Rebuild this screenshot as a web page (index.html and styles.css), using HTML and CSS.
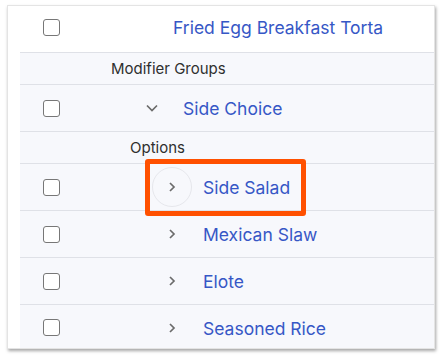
FILE: index.html
```html
<!DOCTYPE html>
<html>
<head>
<meta charset="utf-8">
<link rel="stylesheet" href="styles.css">
</head>
<body>
<div class="card">
  <div class="row row-top">
    <span class="cb"></span>
    <span class="link name-top">Fried Egg Breakfast Torta</span>
  </div>
  <div class="row row-head">
    <span class="label label-groups">Modifier Groups</span>
  </div>
  <div class="row row-item">
    <span class="cb"></span>
    <span class="chev chev-group">
      <svg width="16" height="16" viewBox="0 0 16 16"><path d="M3 5.5 L8 10.5 L13 5.5" fill="none" stroke="#6b6b6b" stroke-width="1.7"/></svg>
    </span>
    <span class="link">Side Choice</span>
  </div>
  <div class="row row-head">
    <span class="label label-options">Options</span>
  </div>
  <div class="row row-item row-focus">
    <span class="cb"></span>
    <span class="chev chev-opt chev-focus">
      <svg width="16" height="16" viewBox="0 0 16 16"><path d="M6 4 L10 8 L6 12" fill="none" stroke="#6b6b6b" stroke-width="1.7"/></svg>
    </span>
    <span class="link">Side Salad</span>
    <span class="highlight"></span>
  </div>
  <div class="row row-item">
    <span class="cb"></span>
    <span class="chev chev-opt">
      <svg width="16" height="16" viewBox="0 0 16 16"><path d="M6 4 L10 8 L6 12" fill="none" stroke="#6b6b6b" stroke-width="1.7"/></svg>
    </span>
    <span class="link">Mexican Slaw</span>
  </div>
  <div class="row row-item">
    <span class="cb"></span>
    <span class="chev chev-opt">
      <svg width="16" height="16" viewBox="0 0 16 16"><path d="M6 4 L10 8 L6 12" fill="none" stroke="#6b6b6b" stroke-width="1.7"/></svg>
    </span>
    <span class="link">Elote</span>
  </div>
  <div class="row row-item row-last">
    <span class="cb"></span>
    <span class="chev chev-opt">
      <svg width="16" height="16" viewBox="0 0 16 16"><path d="M6 4 L10 8 L6 12" fill="none" stroke="#6b6b6b" stroke-width="1.7"/></svg>
    </span>
    <span class="link">Seasoned Rice</span>
  </div>
</div>
</body>
</html>
```

FILE: styles.css
```css
html, body {
  margin: 0;
  padding: 0;
  background: #ffffff;
}
body {
  font-family: Inter, Roboto, "Liberation Sans", sans-serif;
  width: 443px;
  height: 359px;
  overflow: hidden;
}
.card {
  margin: 5px 0 0 7px;
  width: 428px;
  height: 344px;
  background: #ffffff;
  border: 1px solid #e4e4e4;
  box-shadow: 1px 2px 3px rgba(0, 0, 0, 0.35);
  padding-left: 12px;
  box-sizing: border-box;
  display: flex;
  flex-direction: column;
}
.row {
  position: relative;
  display: flex;
  align-items: center;
  background: #f7f8fc;
  border-bottom: 1px solid #dfe1e7;
  flex: none;
}
.row-focus {
  z-index: 2;
}
.row-top {
  background: #ffffff;
  height: 47px;
  padding-bottom: 4px;
  box-sizing: border-box;
}
.row-head {
  height: 31px;
}
.row-item {
  height: 46px;
}
.row-last {
  border-bottom: none;
  flex: 1;
  padding-top: 2px;
}
.cb {
  width: 17px;
  height: 17px;
  box-sizing: border-box;
  border: 1.5px solid #777777;
  border-radius: 3px;
  background: #ffffff;
  margin-left: 23px;
  flex: none;
}
.link {
  color: #3657c6;
  font-size: 17.5px;
  line-height: 20px;
  padding-top: 2px;
  white-space: nowrap;
}
.name-top {
  margin-left: 113px;
}
.label {
  color: #2f2f2f;
  font-size: 15px;
  line-height: 18px;
  padding-top: 1px;
}
.label-groups {
  margin-left: 91px;
}
.label-options {
  margin-left: 110px;
}
.chev {
  position: relative;
  width: 16px;
  height: 16px;
  flex: none;
  display: flex;
  align-items: center;
  justify-content: center;
}
.chev svg {
  display: block;
}
.chev-group {
  margin-left: 84px;
  margin-right: 23px;
}
.chev-opt {
  margin-left: 104px;
  margin-right: 23px;
}
.chev-focus::before {
  content: "";
  position: absolute;
  left: -12px;
  top: -12px;
  width: 40px;
  height: 40px;
  border-radius: 50%;
  border: 1px solid #e6e7ec;
  box-sizing: border-box;
}
.highlight {
  position: absolute;
  left: 125px;
  top: -5px;
  width: 161px;
  height: 57px;
  border: 5px solid #ff5000;
  border-radius: 3px;
  box-sizing: border-box;
}
```
